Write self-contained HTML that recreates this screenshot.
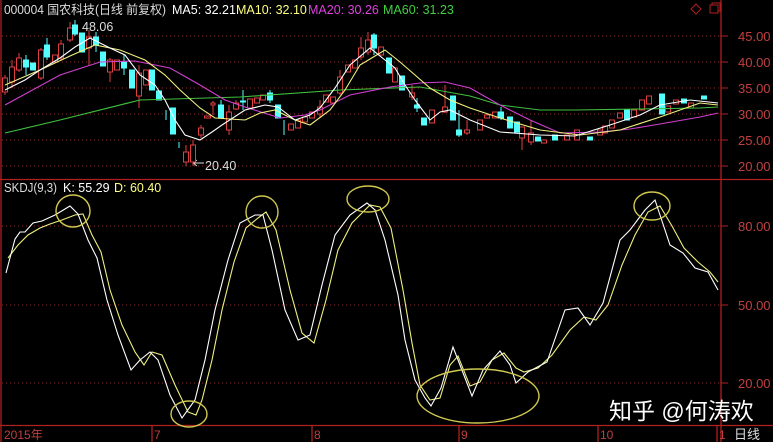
<!DOCTYPE html>
<html><head><meta charset="utf-8"><style>
html,body{margin:0;padding:0;background:#000;width:773px;height:442px;overflow:hidden}
svg{display:block}
text{font-family:"Liberation Sans","Noto Sans CJK SC",sans-serif}
</style></head><body>
<svg width="773" height="442" viewBox="0 0 773 442" xmlns="http://www.w3.org/2000/svg">
<rect width="773" height="442" fill="#000"/>
<g stroke="#b02020" stroke-width="1.3" fill="none">
<line x1="721" y1="0" x2="721" y2="442"/>
<line x1="0" y1="179.5" x2="773" y2="179.5"/>
<line x1="0" y1="425.5" x2="773" y2="425.5"/>
<line x1="1" y1="0" x2="1" y2="442"/>
<line x1="152" y1="425" x2="152" y2="442"/>
<line x1="312" y1="425" x2="312" y2="442"/>
<line x1="459" y1="425" x2="459" y2="442"/>
<line x1="598" y1="425" x2="598" y2="442"/>
<line x1="717" y1="425" x2="717" y2="442"/>
</g>
<g stroke="#b02020" stroke-width="1">
<line x1="721" y1="36" x2="728" y2="36"/><line x1="721" y1="62" x2="728" y2="62"/><line x1="721" y1="88" x2="728" y2="88"/><line x1="721" y1="114" x2="728" y2="114"/><line x1="721" y1="140" x2="728" y2="140"/><line x1="721" y1="166" x2="728" y2="166"/>
<line x1="721" y1="226" x2="728" y2="226"/><line x1="721" y1="305" x2="728" y2="305"/><line x1="721" y1="383" x2="728" y2="383"/>
</g>
<g stroke="#8a2a2a" stroke-width="1" stroke-dasharray="1,3">
<line x1="2" y1="36" x2="720" y2="36"/><line x1="2" y1="62" x2="720" y2="62"/><line x1="2" y1="88" x2="720" y2="88"/><line x1="2" y1="114" x2="720" y2="114"/><line x1="2" y1="140" x2="720" y2="140"/><line x1="2" y1="166" x2="720" y2="166"/>
<line x1="2" y1="226" x2="720" y2="226"/><line x1="2" y1="305" x2="720" y2="305"/><line x1="2" y1="383" x2="720" y2="383"/>
</g>
<g fill="#c04040" font-size="13">
<text x="738" y="41">45.00</text><text x="738" y="67">40.00</text><text x="738" y="93">35.00</text><text x="738" y="119">30.00</text><text x="738" y="145">25.00</text><text x="738" y="171">20.00</text>
<text x="738" y="231">80.00</text><text x="738" y="310">50.00</text><text x="738" y="388">20.00</text>
<text x="4" y="439" font-size="12">2015年</text><text x="154" y="439" font-size="12">7</text><text x="314" y="439" font-size="12">8</text><text x="461" y="439" font-size="12">9</text><text x="600" y="439" font-size="12">10</text><text x="719" y="439" font-size="12">1</text>
</g>
<text x="734" y="439" fill="#ddd" font-size="13">日线</text>
<text x="4" y="14" fill="#ddd" font-size="12.5" textLength="162" lengthAdjust="spacingAndGlyphs">000004 国农科技(日线 前复权)</text>
<text x="172" y="14" fill="#fff" font-size="12.5">MA5: 32.21</text>
<text x="236" y="14" fill="#ffff80" font-size="12.5">MA10: 32.10</text>
<text x="308" y="14" fill="#e040e0" font-size="12.5">MA20: 30.26</text>
<text x="383" y="14" fill="#40d040" font-size="12.5">MA60: 31.23</text>
<g stroke="#b02020" fill="none"><path d="M696 4 l5 5 -5 5 -5 -5z"/><rect x="710" y="5" width="8" height="8"/><path d="M712 5v-2h8v8h-2"/></g>
<text x="4" y="192" fill="#ddd" font-size="12.5" textLength="53" lengthAdjust="spacingAndGlyphs">SKDJ(9,3)</text>
<text x="63" y="192" fill="#fff" font-size="12.5">K: 55.29</text>
<text x="114" y="192" fill="#ffff80" font-size="12.5">D: 60.40</text>
<text x="82" y="31" fill="#ddd" font-size="12.5">48.06</text>
<text x="205" y="170" fill="#ddd" font-size="12.5">20.40</text>
<path d="M193 163h11M193 163l4 -3M193 163l4 3" stroke="#ddd" fill="none"/>
<g stroke="#e04040" fill="#000" stroke-width="1">
<line x1="5" y1="75" x2="5" y2="95"/><rect x="2.5" y="78" width="5" height="14"/>
<line x1="12" y1="60" x2="12" y2="88"/><rect x="9.5" y="67" width="5" height="15"/>
<line x1="19" y1="53" x2="19" y2="72"/><rect x="16.5" y="58" width="5" height="12"/>
<line x1="41" y1="48" x2="41" y2="80"/><rect x="38.5" y="50" width="5" height="28"/>
<rect x="52.5" y="55" width="5" height="7"/>
<line x1="61" y1="40" x2="61" y2="60"/><rect x="58.5" y="44" width="5" height="14"/>
<line x1="70" y1="22" x2="70" y2="42"/><rect x="67.5" y="28" width="5" height="12"/>
<line x1="89" y1="30" x2="89" y2="65"/><rect x="86.5" y="37" width="5" height="11"/>
<line x1="110" y1="58" x2="110" y2="82"/><rect x="107.5" y="60" width="5" height="12"/>
<rect x="114.5" y="60" width="5" height="10"/>
<line x1="139" y1="65" x2="139" y2="108"/><rect x="136.5" y="73" width="5" height="23"/>
<rect x="143.5" y="70" width="5" height="15"/>
<line x1="186" y1="145" x2="186" y2="166"/><rect x="183.5" y="152" width="5" height="10"/>
<line x1="193" y1="140" x2="193" y2="166"/><rect x="190.5" y="145" width="5" height="17"/>
<line x1="201" y1="125" x2="201" y2="138"/><rect x="198.5" y="128" width="5" height="7"/>
<rect x="204.5" y="116" width="6" height="2"/>
<line x1="213" y1="101" x2="213" y2="115"/><rect x="211" y="103" width="4" height="2"/>
<line x1="229" y1="105" x2="229" y2="135"/><rect x="226.5" y="112" width="5" height="18"/>
<line x1="236" y1="100" x2="236" y2="110"/><rect x="233.5" y="103" width="5" height="6"/>
<rect x="247.5" y="99" width="5" height="9"/><rect x="254.5" y="98" width="5" height="5"/><rect x="260.5" y="95" width="5" height="5"/>
<rect x="288.5" y="124" width="5" height="6"/><rect x="295.5" y="120" width="5" height="8"/><rect x="302.5" y="117" width="5" height="5"/><rect x="309.5" y="112" width="5" height="6"/>
<line x1="320" y1="100" x2="320" y2="118"/><rect x="317.5" y="107" width="5" height="7"/>
<rect x="323.5" y="95" width="5" height="7"/><rect x="330.5" y="97" width="5" height="6"/>
<line x1="340" y1="70" x2="340" y2="95"/><rect x="337.5" y="77" width="5" height="16"/>
<rect x="345.5" y="65" width="5" height="7"/><rect x="352.5" y="60" width="5" height="8"/>
<line x1="361" y1="37" x2="361" y2="60"/><rect x="358.5" y="48" width="5" height="9"/>
<line x1="368" y1="32" x2="368" y2="55"/><rect x="365.5" y="40" width="5" height="12"/>
<rect x="378.5" y="47" width="5" height="8"/><rect x="392.5" y="68" width="5" height="14"/>
<line x1="412" y1="85" x2="412" y2="100"/><rect x="409.5" y="93" width="5" height="4"/>
<rect x="429.5" y="110" width="5" height="13"/>
<line x1="445" y1="85" x2="445" y2="113"/><rect x="442.5" y="107" width="5" height="5"/>
<line x1="467" y1="120" x2="467" y2="135"/><rect x="464.5" y="130" width="5" height="3"/>
<rect x="477.5" y="120" width="5" height="10"/><rect x="484.5" y="115" width="5" height="3"/><rect x="492.5" y="112" width="5" height="6"/>
<line x1="522" y1="128" x2="522" y2="150"/><rect x="519.5" y="127" width="5" height="11"/>
<line x1="531" y1="120" x2="531" y2="145"/><rect x="528.5" y="133" width="5" height="9"/>
<rect x="541.5" y="140" width="5" height="3"/><rect x="564.5" y="135" width="5" height="5"/><rect x="574.5" y="130" width="5" height="10"/>
<rect x="597.5" y="130" width="5" height="5"/><rect x="602.5" y="126" width="5" height="7"/><rect x="609.5" y="120" width="5" height="8"/><rect x="617.5" y="113" width="5" height="5"/>
<rect x="631.5" y="110" width="5" height="7"/><rect x="639.5" y="100" width="5" height="10"/><rect x="646.5" y="96" width="5" height="8"/><rect x="665.5" y="106" width="5" height="6"/><rect x="673.5" y="100" width="5" height="4"/><rect x="688.5" y="103" width="5" height="5"/>
</g>
<g stroke="#54ffff" fill="#54ffff" stroke-width="1">
<line x1="26" y1="55" x2="26" y2="75"/><rect x="23.5" y="60" width="5" height="7"/>
<rect x="30.5" y="63" width="5" height="7"/>
<line x1="47" y1="38" x2="47" y2="60"/><rect x="44.5" y="45" width="5" height="12"/>
<line x1="75" y1="20" x2="75" y2="36"/><rect x="72.5" y="25" width="5" height="9"/>
<rect x="79.5" y="33" width="5" height="19"/>
<line x1="96" y1="32" x2="96" y2="52"/><rect x="93.5" y="37" width="5" height="8"/>
<rect x="100.5" y="52" width="5" height="14"/>
<line x1="124" y1="55" x2="124" y2="75"/><rect x="121.5" y="62" width="5" height="6"/>
<rect x="129.5" y="70" width="5" height="18"/>
<rect x="149.5" y="70" width="5" height="20"/><rect x="156.5" y="91" width="5" height="9"/>
<line x1="166" y1="110" x2="166" y2="120"/>
<rect x="170.5" y="108" width="5" height="26"/>
<line x1="179" y1="142" x2="179" y2="148"/>
<line x1="221" y1="100" x2="221" y2="118"/><rect x="218.5" y="105" width="5" height="13"/>
<line x1="243" y1="90" x2="243" y2="110"/><rect x="240.5" y="101" width="5" height="1"/>
<line x1="270" y1="90" x2="270" y2="103"/><rect x="267.5" y="93" width="5" height="7"/>
<rect x="275.5" y="105" width="5" height="13"/>
<line x1="284" y1="120" x2="284" y2="135"/>
<line x1="374" y1="33" x2="374" y2="55"/><rect x="371.5" y="35" width="5" height="13"/>
<rect x="386.5" y="58" width="5" height="15"/>
<rect x="399.5" y="76" width="5" height="14"/>
<line x1="417" y1="98" x2="417" y2="112"/><rect x="414.5" y="105" width="5" height="3"/>
<rect x="421.5" y="118" width="5" height="7"/>
<rect x="450.5" y="96" width="5" height="24"/>
<line x1="459" y1="110" x2="459" y2="137"/><rect x="456.5" y="130" width="5" height="5"/>
<line x1="501" y1="107" x2="501" y2="120"/><rect x="498.5" y="112" width="5" height="6"/>
<rect x="507.5" y="117" width="5" height="11"/><rect x="514.5" y="122" width="5" height="10"/>
<rect x="535.5" y="137" width="5" height="4"/><rect x="552.5" y="135" width="5" height="5"/><rect x="587.5" y="137" width="5" height="3"/>
<rect x="624.5" y="110" width="5" height="10"/><rect x="659.5" y="94" width="5" height="20"/><rect x="681.5" y="99" width="5" height="4"/><rect x="701.5" y="96" width="5" height="3"/>
</g>
<g fill="none" stroke-width="1.1">
<polyline stroke="#40c040" points="5,133 60,120 140,100 240,97 340,90 420,87 470,96 500,105 540,110 575,110 640,109 700,108 718,107"/>
<polyline stroke="#d040d0" points="5,105 60,75 100,62 135,61 170,68 200,85 225,100 245,107 280,118 305,115 320,110 350,95 390,87 420,83 445,82 470,88 500,105 530,120 560,133 600,132 630,129 660,124 700,117 718,113"/>
<polyline stroke="#f0f080" points="5,85 40,70 70,56 95,45 120,50 145,60 165,75 180,90 200,108 215,118 245,120 260,113 275,110 295,120 310,125 330,110 345,90 360,65 385,50 400,62 415,75 430,88 450,100 470,108 500,118 540,130 580,135 620,130 660,117 700,103 718,105"/>
<polyline stroke="#ffffff" points="5,90 25,80 40,70 60,58 75,47 90,38 110,48 125,55 140,75 155,85 165,100 175,120 185,135 200,140 212,132 222,125 245,110 265,105 278,107 295,120 310,115 320,108 335,88 350,65 370,48 385,60 395,68 405,85 415,100 430,120 440,112 450,110 470,120 500,132 540,135 575,136 610,125 640,115 660,105 690,100 718,103"/>
</g>
<g fill="none" stroke-width="1.1">
<polyline stroke="#f0f080" points="8,258 18,245 28,235 40,228 50,224 62,220 75,215 83,214 92,235 101,252 110,290 122,325 135,352 144,365 152,352 162,355 175,385 188,412 196,415 202,400 212,360 222,310 234,262 246,228 258,218 266,212 276,230 290,290 302,333 314,343 326,300 338,250 352,223 370,205 380,207 391,228 403,290 412,343 420,385 430,400 440,398 450,365 458,356 470,386 480,382 492,360 504,353 516,368 524,372 538,368 552,355 570,330 584,317 596,320 608,305 622,265 635,235 648,212 660,206 672,226 684,248 698,262 710,272 718,282"/>
<polyline stroke="#ffffff" points="6,273 15,239 20,232 25,232 33,223 42,221 55,215 70,206 78,214 88,240 97,258 107,300 118,335 131,370 140,360 150,352 158,360 170,395 182,418 195,400 205,360 215,310 228,260 240,223 255,215 263,215 272,250 285,310 298,340 310,335 322,285 335,235 350,215 367,203 375,210 385,240 398,295 405,340 415,380 425,398 431,406 441,388 453,347 465,378 472,396 483,370 500,351 510,365 516,383 528,372 547,362 565,310 578,308 590,325 603,303 620,240 630,230 645,210 655,200 670,245 683,253 695,268 708,272 718,290"/>
</g>
<g fill="none" stroke="#d0c850" stroke-width="1.4">
<ellipse cx="73" cy="211" rx="17" ry="16"/>
<ellipse cx="262" cy="212" rx="16" ry="16"/>
<ellipse cx="368" cy="199" rx="21" ry="13"/>
<ellipse cx="189" cy="414" rx="18" ry="13"/>
<ellipse cx="652" cy="206" rx="18" ry="14"/>
<ellipse cx="478" cy="396" rx="61" ry="27"/>
</g>
<text x="609" y="419" fill="#fff" font-size="23" font-family="'Noto Sans CJK SC',sans-serif">知乎 @何涛欢</text>
</svg>
</body></html>
